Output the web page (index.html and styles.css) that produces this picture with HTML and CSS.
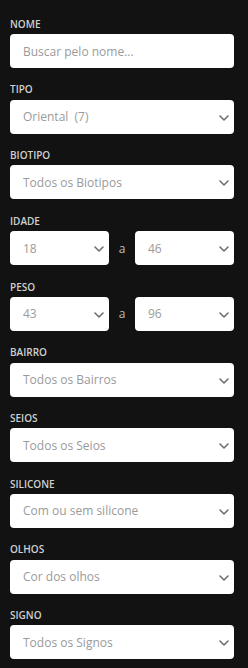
FILE: index.html
```html
<!DOCTYPE html>
<html lang="pt-BR">
<head>
  <meta charset="UTF-8">
  <meta name="viewport" content="width=device-width, initial-scale=1">
  <title>Filtros</title>
  <link rel="stylesheet" href="styles.css">
</head>
<body>
  <form class="filters">
    <div class="field">
      <label for="nome">Nome</label>
      <input id="nome" type="text" placeholder="Buscar pelo nome...">
    </div>

    <div class="field">
      <label for="tipo">Tipo</label>
      <div class="select-wrap">
        <select id="tipo"><option>Oriental&nbsp; (7)</option></select>
        <svg class="chevron" viewBox="0 0 10 6"><polyline points="1,1 5,5 9,1"/></svg>
      </div>
    </div>

    <div class="field">
      <label for="biotipo">Biotipo</label>
      <div class="select-wrap">
        <select id="biotipo"><option>Todos os Biotipos</option></select>
        <svg class="chevron" viewBox="0 0 10 6"><polyline points="1,1 5,5 9,1"/></svg>
      </div>
    </div>

    <div class="field">
      <label for="idade-min">Idade</label>
      <div class="range">
        <div class="select-wrap">
          <select id="idade-min"><option>18</option></select>
          <svg class="chevron" viewBox="0 0 10 6"><polyline points="1,1 5,5 9,1"/></svg>
        </div>
        <span class="sep">a</span>
        <div class="select-wrap">
          <select id="idade-max"><option>46</option></select>
          <svg class="chevron" viewBox="0 0 10 6"><polyline points="1,1 5,5 9,1"/></svg>
        </div>
      </div>
    </div>

    <div class="field">
      <label for="peso-min">Peso</label>
      <div class="range">
        <div class="select-wrap">
          <select id="peso-min"><option>43</option></select>
          <svg class="chevron" viewBox="0 0 10 6"><polyline points="1,1 5,5 9,1"/></svg>
        </div>
        <span class="sep">a</span>
        <div class="select-wrap">
          <select id="peso-max"><option>96</option></select>
          <svg class="chevron" viewBox="0 0 10 6"><polyline points="1,1 5,5 9,1"/></svg>
        </div>
      </div>
    </div>

    <div class="field">
      <label for="bairro">Bairro</label>
      <div class="select-wrap">
        <select id="bairro"><option>Todos os Bairros</option></select>
        <svg class="chevron" viewBox="0 0 10 6"><polyline points="1,1 5,5 9,1"/></svg>
      </div>
    </div>

    <div class="field">
      <label for="seios">Seios</label>
      <div class="select-wrap">
        <select id="seios"><option>Todos os Seios</option></select>
        <svg class="chevron" viewBox="0 0 10 6"><polyline points="1,1 5,5 9,1"/></svg>
      </div>
    </div>

    <div class="field">
      <label for="silicone">Silicone</label>
      <div class="select-wrap">
        <select id="silicone"><option>Com ou sem silicone</option></select>
        <svg class="chevron" viewBox="0 0 10 6"><polyline points="1,1 5,5 9,1"/></svg>
      </div>
    </div>

    <div class="field">
      <label for="olhos">Olhos</label>
      <div class="select-wrap">
        <select id="olhos"><option>Cor dos olhos</option></select>
        <svg class="chevron" viewBox="0 0 10 6"><polyline points="1,1 5,5 9,1"/></svg>
      </div>
    </div>

    <div class="field">
      <label for="signo">Signo</label>
      <div class="select-wrap">
        <select id="signo"><option>Todos os Signos</option></select>
        <svg class="chevron" viewBox="0 0 10 6"><polyline points="1,1 5,5 9,1"/></svg>
      </div>
    </div>
  </form>
</body>
</html>
```

FILE: styles.css
```css
:root {
  --bg: #121212;
  --label: #d0d0d0;
  --field-bg: #ffffff;
  --field-text: #9a9a9a;
  --chevron: #6e6e6e;
}

* {
  box-sizing: border-box;
  font-family: 'Open Sans', sans-serif;
}

body {
  margin: 0;
  background: var(--bg);
}

.filters {
  padding: 17.8px 14px 0 10px;
}

.field {
  margin-bottom: 15.4px;
}

.field label {
  display: block;
  font-size: 10px;
  font-weight: 600;
  line-height: 13px;
  margin-bottom: 3.3px;
  color: var(--label);
  text-transform: uppercase;
}

input,
select {
  display: block;
  width: 100%;
  height: 34px;
  padding: 0 24px 0 13px;
  border: none;
  border-radius: 4px;
  background: var(--field-bg);
  color: var(--field-text);
  font-size: 12px;
  outline: none;
  -webkit-appearance: none;
  appearance: none;
}

input::placeholder {
  color: var(--field-text);
}

.select-wrap {
  position: relative;
}

.chevron {
  position: absolute;
  right: 5px;
  top: 15px;
  width: 10px;
  height: 6px;
  pointer-events: none;
}

.chevron polyline {
  fill: none;
  stroke: var(--chevron);
  stroke-width: 1.6;
  stroke-linecap: round;
  stroke-linejoin: round;
}

.range {
  display: grid;
  grid-template-columns: 1fr 26px 1fr;
  align-items: center;
}

.sep {
  text-align: center;
  font-size: 12px;
  color: #bdbdbd;
}
```
